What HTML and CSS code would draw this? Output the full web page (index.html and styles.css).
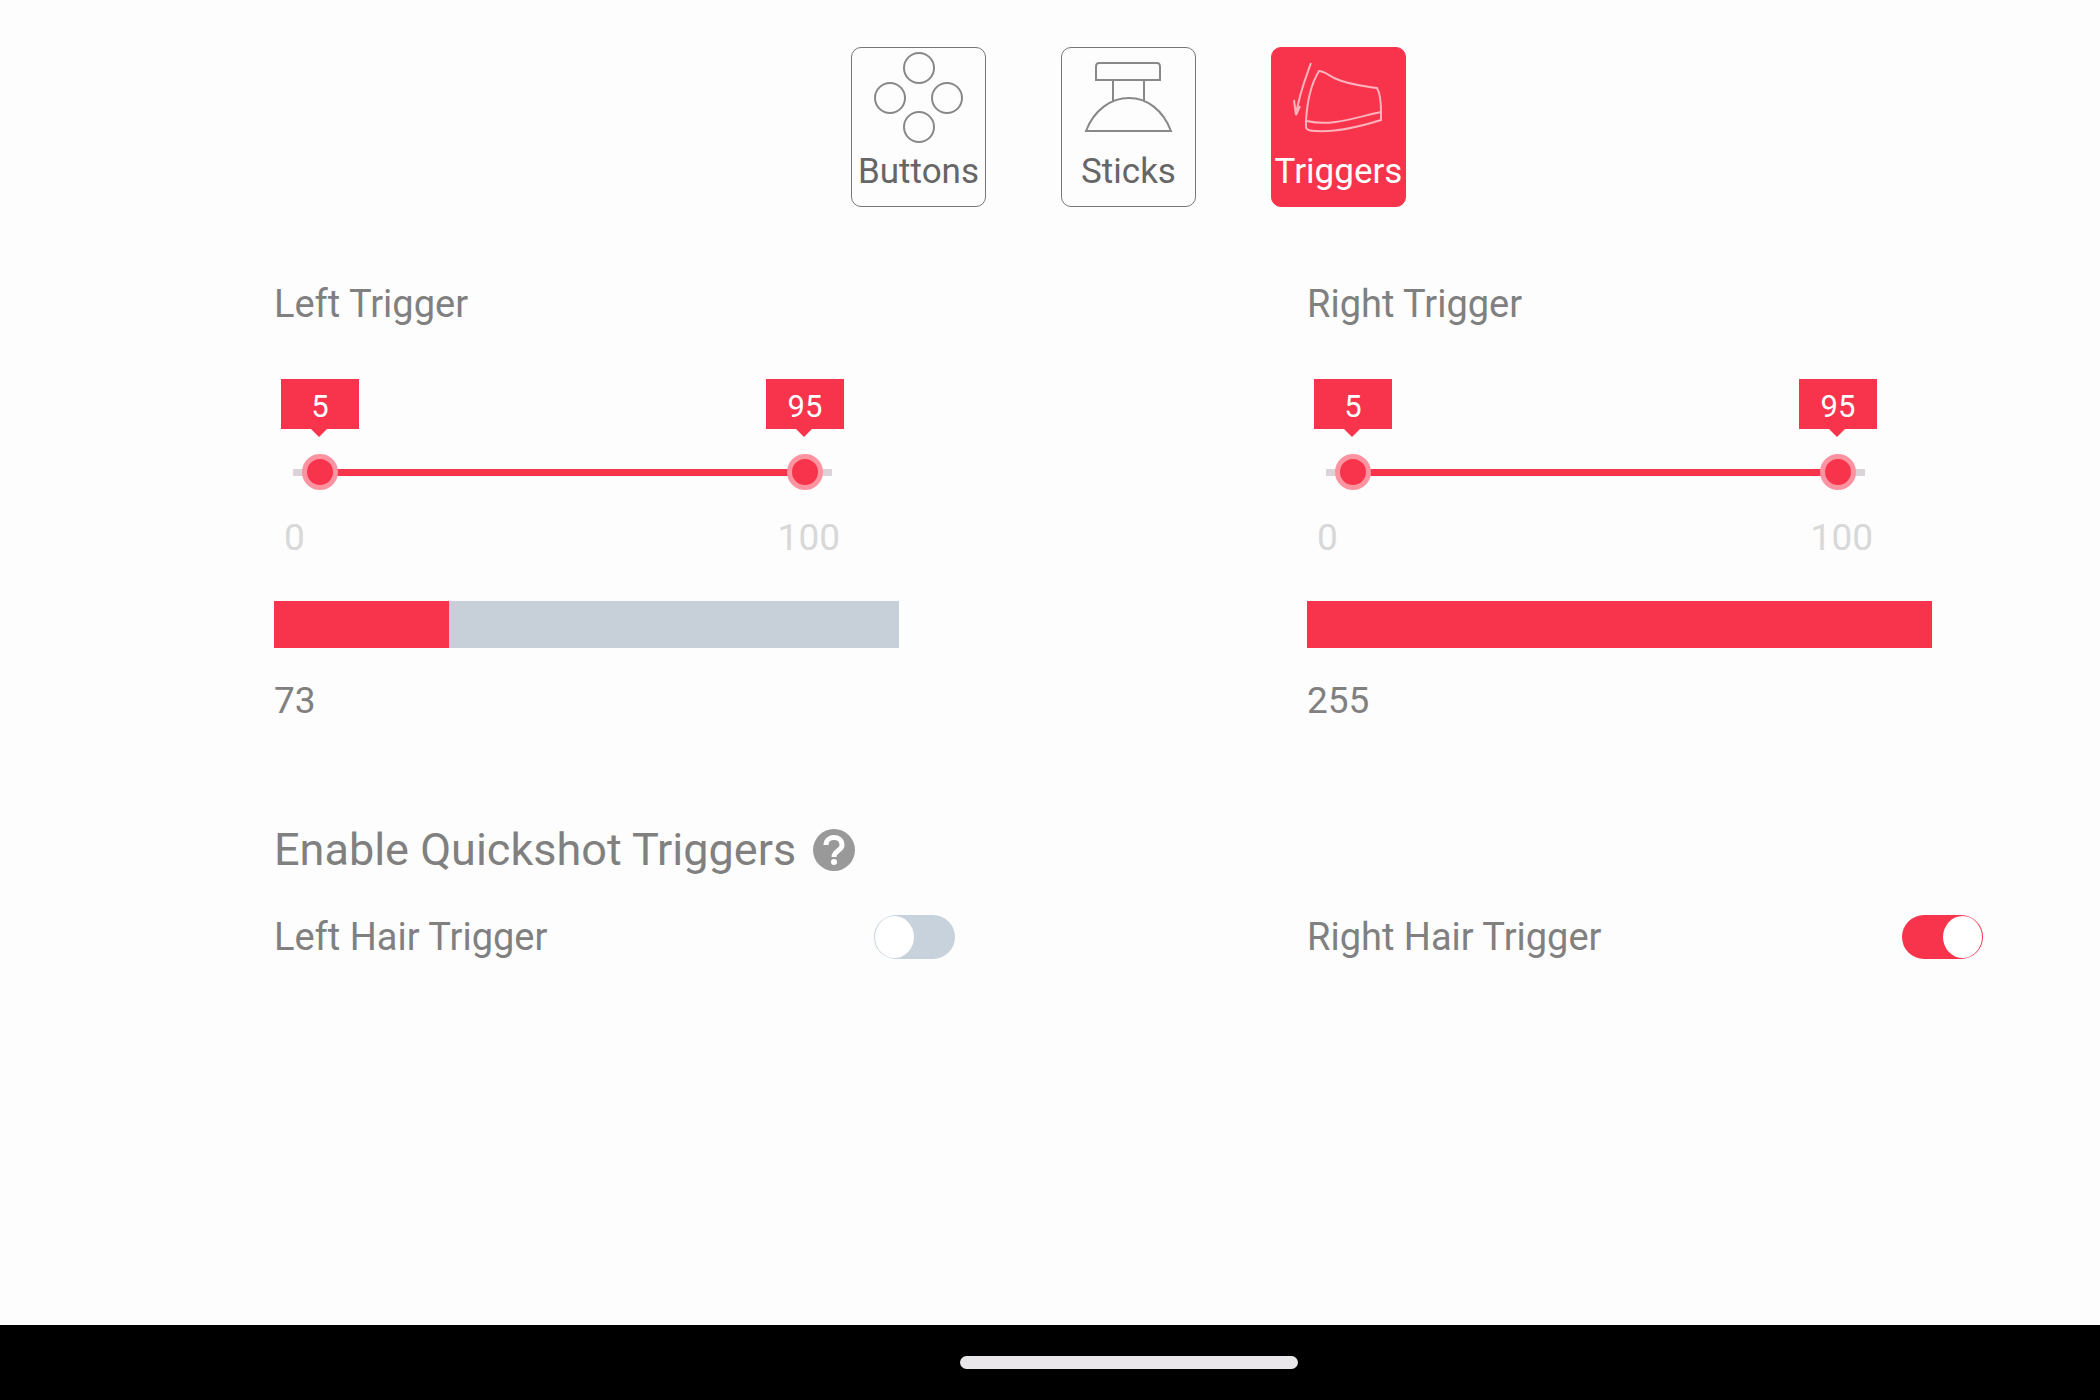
FILE: index.html
```
<!DOCTYPE html>
<html lang="en">
<head>
  <meta charset="UTF-8" />
  <meta name="viewport" content="width=device-width, initial-scale=1.0"/>
  <title>Triggers</title>
  <link rel="stylesheet" href="styles.css">
</head>
<body>

  <main>
    <!-- Tabs -->
    <nav class="tabs">
      <button type="button" class="tab">
        <svg viewBox="0 0 135 104" aria-hidden="true">
          <circle cx="68" cy="20" r="15"/>
          <circle cx="39" cy="50" r="15"/>
          <circle cx="96" cy="50" r="15"/>
          <circle cx="68" cy="79" r="15"/>
        </svg>
        <span>Buttons</span>
      </button>
      <button type="button" class="tab">
        <svg viewBox="0 0 135 104" aria-hidden="true">
          <path d="M38 15H96Q99 15 99 19V32H35V19Q35 15 38 15Z"/>
          <path d="M52 32V53M83 32V53"/>
          <path d="M25 83C33 62 50 50 68 50S102 62 110 83Z"/>
        </svg>
        <span>Sticks</span>
      </button>
      <button type="button" class="tab active">
        <svg viewBox="0 0 135 104" aria-hidden="true">
          <path d="M40 15C35 29 28 46 25 67L23 52M25 67L29 58"/>
          <path d="M48 23C53 23 57 27 63 30C78 37 92 38 106 40C110 47 110 56 110 64V72C88 79 62 84 45 83Q35 83 35 79V73C36 55 40 36 48 23Z"/>
          <path d="M36 73C60 79 86 69 110 64"/>
        </svg>
        <span>Triggers</span>
      </button>
    </nav>

    <!-- Trigger ranges -->
    <div class="columns">
      <section class="trigger">
        <h2>Left Trigger</h2>
        <div class="slider">
          <output class="bubble" style="left: 5%">5</output>
          <output class="bubble" style="left: 95%">95</output>
          <div class="range" style="left: 5%; right: 5%"></div>
          <input type="range" min="0" max="100" value="5" aria-label="Left trigger minimum">
          <input type="range" min="0" max="100" value="95" aria-label="Left trigger maximum">
        </div>
        <div class="limits"><span>0</span><span>100</span></div>
        <progress max="100" value="28" aria-label="Left trigger input"></progress>
        <p class="value">73</p>
      </section>

      <section class="trigger">
        <h2>Right Trigger</h2>
        <div class="slider">
          <output class="bubble" style="left: 5%">5</output>
          <output class="bubble" style="left: 95%">95</output>
          <div class="range" style="left: 5%; right: 5%"></div>
          <input type="range" min="0" max="100" value="5" aria-label="Right trigger minimum">
          <input type="range" min="0" max="100" value="95" aria-label="Right trigger maximum">
        </div>
        <div class="limits"><span>0</span><span>100</span></div>
        <progress max="100" value="100" aria-label="Right trigger input"></progress>
        <p class="value">255</p>
      </section>
    </div>

    <!-- Quickshot -->
    <div class="quickshot">
      <h1>Enable Quickshot Triggers</h1>
      <button type="button" class="help" aria-label="Help">
        <svg viewBox="0 0 44 44" aria-hidden="true">
          <circle cx="22" cy="22" r="21"/>
          <path d="M14 17C14 7 30 7 30 17C30 23 22 22 22 29"/>
          <circle class="dot" cx="22" cy="34" r="3"/>
        </svg>
      </button>
    </div>
    <div class="columns">
      <div class="switch-row">
        <label for="leftHair">Left Hair Trigger</label>
        <input type="checkbox" class="switch" id="leftHair">
      </div>
      <div class="switch-row">
        <label for="rightHair">Right Hair Trigger</label>
        <input type="checkbox" class="switch" id="rightHair" checked>
      </div>
    </div>
  </main>

  <footer>
    <div class="home-bar"></div>
  </footer>

</body>
</html>
```
FILE: styles.css
```
* {
  box-sizing: border-box;
}
body {
  display: flex;
  flex-direction: column;
  min-height: 100vh;
  margin: 0;
  background-color: #fdfdfd;
  color: #808080;
  font-family: Roboto, sans-serif;
  font-size: 37px;
  line-height: 44px;
}
h1, h2, p {
  margin: 0;
  font-weight: 400;
}
h1 {
  font-size: 45px;
  line-height: 52px;
}
h2, label {
  font-size: 38px;
}
main {
  flex: 1;
  padding: 47px 117px 0 274px;
}
.tabs {
  display: flex;
  justify-content: center;
  gap: 75px;
  margin-bottom: 75px;
}
.tab {
  display: flex;
  flex-direction: column;
  align-items: center;
  width: 135px;
  height: 160px;
  padding: 0;
  border: 1px solid #777;
  border-radius: 10px;
  background-color: #fdfdfd;
  color: #666;
  font-family: inherit;
  font-size: 35px;
  line-height: 40px;
  cursor: pointer;
}
.tab svg {
  width: 135px;
  height: 104px;
  fill: none;
  stroke: #888;
  stroke-width: 2;
}
.tab.active {
  border-color: #f7344b;
  background-color: #f7344b;
  color: #fff;
}
.tab.active svg {
  stroke: #ffb3bd;
}
.columns {
  display: grid;
  grid-template-columns: 681fr 676fr;
  gap: 352px;
}
.slider {
  position: relative;
  width: 539px;
  height: 132px;
  margin: 53px 0 0 19px;
}
.slider::before, .range {
  content: "";
  position: absolute;
  top: 90px;
  left: 0;
  right: 0;
  height: 7px;
  background-color: #dcd3d8;
}
.range {
  background-color: #f7344b;
}
.bubble {
  position: absolute;
  top: 0;
  width: 78px;
  height: 50px;
  margin-left: -39px;
  padding-top: 6px;
  background-color: #f7344b;
  color: #fff;
  font-size: 31px;
  text-align: center;
}
.bubble::after {
  content: "";
  position: absolute;
  top: 50px;
  left: 30px;
  border: 8px solid transparent;
  border-top-color: #f7344b;
  border-bottom: 0;
}
.slider input {
  -webkit-appearance: none;
  appearance: none;
  position: absolute;
  top: 75px;
  left: -18px;
  width: calc(100% + 36px);
  height: 36px;
  margin: 0;
  background: none;
  pointer-events: none;
}
.slider input::-webkit-slider-thumb {
  -webkit-appearance: none;
  width: 36px;
  height: 36px;
  border: 5px solid #fb93a1;
  border-radius: 50%;
  background-color: #f7344b;
  pointer-events: auto;
  cursor: pointer;
}
.limits {
  display: flex;
  justify-content: space-between;
  width: 566px;
  margin: 5px 0 41px;
  padding-left: 10px;
  color: #d8d8d8;
}
progress {
  -webkit-appearance: none;
  appearance: none;
  display: block;
  width: 100%;
  max-width: 625px;
  height: 47px;
  margin-bottom: 31px;
  border: 0;
}
progress::-webkit-progress-bar {
  background-color: #c7d0d9;
}
progress::-webkit-progress-value {
  background-color: #f7344b;
}
.quickshot {
  display: flex;
  align-items: center;
  gap: 16px;
  margin: 101px 0 39px;
}
.help {
  width: 44px;
  height: 44px;
  padding: 0;
  border: 0;
  background: none;
  cursor: pointer;
}
.help svg {
  display: block;
  fill: #999;
}
.help path {
  fill: none;
  stroke: #fff;
  stroke-width: 5;
}
.help .dot {
  fill: #fff;
}
.switch-row {
  display: flex;
  align-items: center;
  justify-content: space-between;
}
.switch {
  -webkit-appearance: none;
  appearance: none;
  display: flex;
  width: 81px;
  height: 44px;
  margin: 0;
  padding: 1px;
  border-radius: 22px;
  background-color: #c7d2dc;
  cursor: pointer;
}
.switch::before {
  content: "";
  width: 39px;
  border-radius: 50%;
  background-color: #fff;
}
.switch:checked {
  justify-content: flex-end;
  background-color: #f7344b;
}
footer {
  display: flex;
  justify-content: center;
  height: 75px;
  padding: 31px 0 0 158px;
  background-color: #000;
}
.home-bar {
  width: 338px;
  height: 13px;
  border-radius: 7px;
  background-color: #e9e7e9;
}
```
